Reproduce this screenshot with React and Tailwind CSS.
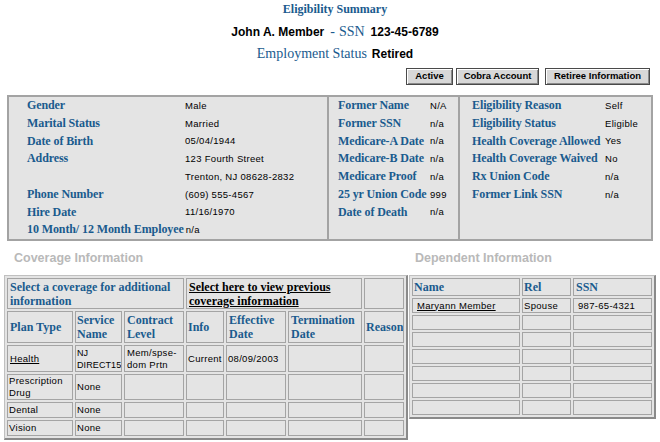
const serif = "font-['Liberation_Serif','Times_New_Roman',serif]";
const sans = "font-['Liberation_Sans',Arial,sans-serif]";
const blue = "text-[#1a5b8e]";
const cell = "border border-[#a4a4a4] bg-[#e4e4e4] flex items-center overflow-hidden";
const head = "font-['Liberation_Serif','Times_New_Roman',serif] font-bold text-[12px] leading-[14px] text-[#1a5b8e]";
const body = "font-['Liberation_Sans',Arial,sans-serif] text-[9.5px] leading-[12px] tracking-[0.3px] text-black";

function Button({ className, children }) {
  return (
    <div
      className={`${className} flex h-[17px] items-center justify-center border border-[#4a4a4a] bg-[#d8d8d8] shadow-[inset_1px_1px_0_#ffffff,inset_-1px_-1px_0_#8a8a8a] font-['Liberation_Sans',Arial,sans-serif] text-[9.5px] font-bold text-black`}
    >
      {children}
    </div>
  );
}

function InfoRow({ label, value, labelW }) {
  return (
    <div className="flex h-[17.75px] items-center">
      <div
        className={`${labelW} shrink-0 whitespace-nowrap pr-[2px] font-['Liberation_Serif','Times_New_Roman',serif] text-[12px] font-bold leading-[17.75px] tracking-[-0.1px] text-[#1a5b8e]`}
      >
        {label}
      </div>
      <div className="whitespace-nowrap font-['Liberation_Sans',Arial,sans-serif] text-[9.5px] leading-[12px] tracking-[0.3px] text-black">
        {value}
      </div>
    </div>
  );
}

const col1 = [
  ["Gender", "Male"],
  ["Marital Status", "Married"],
  ["Date of Birth", "05/04/1944"],
  ["Address", "123 Fourth Street"],
  ["", "Trenton, NJ 08628-2832"],
  ["Phone Number", "(609) 555-4567"],
  ["Hire Date", "11/16/1970"],
  ["10 Month/ 12 Month Employee", "n/a"],
];
const col2 = [
  ["Former Name", "N/A"],
  ["Former SSN", "n/a"],
  ["Medicare-A Date", "n/a"],
  ["Medicare-B Date", "n/a"],
  ["Medicare Proof", "n/a"],
  ["25 yr Union Code", "999"],
  ["Date of Death", "n/a"],
];
const col3 = [
  ["Eligibility Reason", "Self"],
  ["Eligibility Status", "Eligible"],
  ["Health Coverage Allowed", "Yes"],
  ["Health Coverage Waived", "No"],
  ["Rx Union Code", "n/a"],
  ["Former Link SSN", "n/a"],
];

const emptyRows = [0, 1, 2, 3, 4, 5];

export default function App() {
  return (
    <div className="h-[442px] w-[660px] overflow-hidden bg-white">
      {/* Header */}
      <div className="pl-[10px] pt-[2px] text-center">
        <div className={`${serif} ${blue} text-[12px] font-bold leading-[15px]`}>Eligibility Summary</div>
        <div className="mt-[3px] h-[20px] leading-[20px]">
          <span className={`${sans} text-[12px] font-bold text-black`}>John A. Member</span>
          <span className={`${serif} ${blue} ml-[6px] text-[14px]`}>-</span>
          <span className={`${serif} ${blue} ml-[4px] text-[14px]`}>SSN</span>
          <span className={`${sans} ml-[6px] text-[12px] font-bold text-black`}>123-45-6789</span>
        </div>
        <div className="mt-[2px] h-[20px] leading-[20px]">
          <span className={`${serif} ${blue} text-[14px]`}>Employment Status</span>
          <span className={`${sans} ml-[5px] text-[12px] font-bold text-black`}>Retired</span>
        </div>
      </div>

      {/* Buttons */}
      <div className="mt-[6px] flex justify-end pr-[10px]">
        <Button className="w-[47px]">Active</Button>
        <Button className="ml-[3px] w-[83px]">Cobra Account</Button>
        <Button className="ml-[6px] w-[105px]">Retiree Information</Button>
      </div>

      {/* Info box */}
      <div className="ml-[7px] mt-[10px] flex h-[146px] w-[646px] border-2 border-[#a3a3a3] bg-[#e4e4e4]">
        <div className="w-[320px] border-r-2 border-[#a3a3a3] pl-[18px]">
          {col1.map(([l, v], i) => (
            <InfoRow key={i} label={l} value={v} labelW="min-w-[158px]" />
          ))}
        </div>
        <div className="w-[131px] border-r-2 border-[#a3a3a3] pl-[9px]">
          {col2.map(([l, v], i) => (
            <InfoRow key={i} label={l} value={v} labelW="min-w-[92px]" />
          ))}
        </div>
        <div className="flex-1 pl-[12px]">
          {col3.map(([l, v], i) => (
            <InfoRow key={i} label={l} value={v} labelW="min-w-[133px]" />
          ))}
        </div>
      </div>

      {/* Section headings */}
      <div className="mt-[9px] flex h-[16px] font-['Liberation_Sans',Arial,sans-serif] text-[12.5px] font-bold leading-[16px] text-[#b9b9b9]">
        <div className="w-[415px] pl-[14px]">Coverage Information</div>
        <div>Dependent Information</div>
      </div>

      {/* Tables */}
      <div className="mt-[9px] flex items-start">
        {/* Coverage table */}
        <div className="ml-[4px] grid w-[404px] grid-cols-[66px_47px_60px_38px_60px_74px_40px] grid-rows-[31px_32px_27px_26px_16px_16px] gap-[2px] border-b-2 border-l border-r-2 border-t border-b-[#8a8a8a] border-l-[#c0c0c0] border-r-[#8a8a8a] border-t-[#c0c0c0] bg-[#e4e4e4] p-[2px]">
          <div className={`${cell} col-span-3 px-[2px]`}>
            <span className={head}>Select a coverage for additional information</span>
          </div>
          <div className={`${cell} col-span-3 px-[2px]`}>
            <span className="font-['Liberation_Serif','Times_New_Roman',serif] text-[12px] font-bold leading-[14px] text-black underline">
              Select here to view previous coverage information
            </span>
          </div>
          <div className={cell}></div>

          <div className={`${cell} px-[2px]`}><span className={head}>Plan Type</span></div>
          <div className={`${cell} px-[1px]`}><span className={head}>Service Name</span></div>
          <div className={`${cell} px-[2px]`}><span className={head}>Contract Level</span></div>
          <div className={`${cell} px-[1px]`}><span className={head}>Info</span></div>
          <div className={`${cell} px-[2px]`}><span className={head}>Effective Date</span></div>
          <div className={`${cell} px-[2px]`}><span className={head}>Termination Date</span></div>
          <div className={`${cell} px-[1px]`}><span className={head}>Reason</span></div>

          <div className={`${cell} px-[2px]`}><span className={`${body} underline`}>Health</span></div>
          <div className={`${cell} px-[1px]`}>
            <span className="whitespace-nowrap font-['Liberation_Sans',Arial,sans-serif] text-[9px] leading-[12px] tracking-[0.1px] text-black">NJ<br />DIRECT15</span>
          </div>
          <div className={`${cell} px-[2px]`}>
            <span className={`${body} whitespace-nowrap`}>Mem/spse-<br />dom Prtn</span>
          </div>
          <div className={`${cell} px-[1px]`}><span className={body}>Current</span></div>
          <div className={`${cell} px-[1px]`}><span className={body}>08/09/2003</span></div>
          <div className={cell}></div>
          <div className={cell}></div>

          <div className={`${cell} px-[1px]`}><span className={body}>Prescription Drug</span></div>
          <div className={`${cell} px-[1px]`}><span className={body}>None</span></div>
          <div className={cell}></div>
          <div className={cell}></div>
          <div className={cell}></div>
          <div className={cell}></div>
          <div className={cell}></div>

          <div className={`${cell} px-[1px]`}><span className={body}>Dental</span></div>
          <div className={`${cell} px-[1px]`}><span className={body}>None</span></div>
          <div className={cell}></div>
          <div className={cell}></div>
          <div className={cell}></div>
          <div className={cell}></div>
          <div className={cell}></div>

          <div className={`${cell} px-[1px]`}><span className={body}>Vision</span></div>
          <div className={`${cell} px-[1px]`}><span className={body}>None</span></div>
          <div className={cell}></div>
          <div className={cell}></div>
          <div className={cell}></div>
          <div className={cell}></div>
          <div className={cell}></div>
        </div>

        {/* Dependent table */}
        <div className="ml-[1px] grid w-[247px] grid-cols-[108px_49px_79px] grid-rows-[18px_repeat(7,15px)] gap-[2px] border-b-2 border-l border-r-2 border-t border-b-[#8a8a8a] border-l-[#c0c0c0] border-r-[#8a8a8a] border-t-[#c0c0c0] bg-[#e4e4e4] p-[2px]">
          <div className={`${cell} pl-[1px]`}><span className={head}>Name</span></div>
          <div className={`${cell} pl-[1px]`}><span className={head}>Rel</span></div>
          <div className={`${cell} pl-[2px]`}><span className={head}>SSN</span></div>

          <div className={`${cell} pl-[4px]`}><span className={`${body} underline`}>Maryann Member</span></div>
          <div className={`${cell} pl-[1px]`}><span className={body}>Spouse</span></div>
          <div className={`${cell} pl-[4px]`}><span className={body}>987-65-4321</span></div>

          {emptyRows.map((r) => (
            <div key={r} className="contents">
              <div className={cell}></div>
              <div className={cell}></div>
              <div className={cell}></div>
            </div>
          ))}
        </div>
      </div>
    </div>
  );
}
